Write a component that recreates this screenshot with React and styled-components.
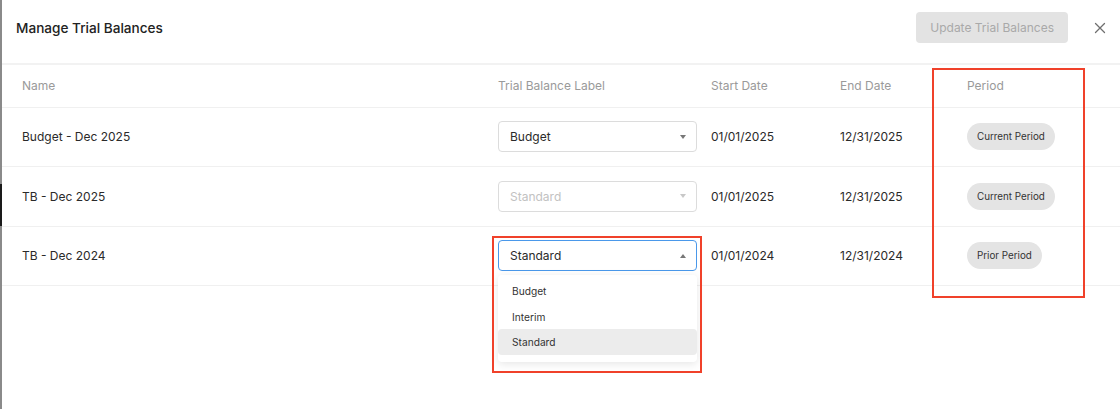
import React from "react";
import styled, { createGlobalStyle } from "styled-components";

const GlobalStyle = createGlobalStyle`
  html, body {
    margin: 0;
    padding: 0;
    background: #ffffff;
  }
  body {
    font-family: Inter, "Noto Sans", "Liberation Sans", sans-serif;
    color: #222;
  }
`;

const rows = [
  { name: "Budget - Dec 2025", label: "Budget", start: "01/01/2025", end: "12/31/2025", period: "Current Period" },
  { name: "TB - Dec 2025", label: "Standard", start: "01/01/2025", end: "12/31/2025", period: "Current Period", disabled: true },
  { name: "TB - Dec 2024", label: "Standard", start: "01/01/2024", end: "12/31/2024", period: "Prior Period", open: true },
];

const options = ["Budget", "Interim", "Standard"];

function App() {
  return (
    <>
      <GlobalStyle />
      <Page>
        <Backdrop />
        <Modal>
          <Header>
            <Title>Manage Trial Balances</Title>
            <Actions>
              <UpdateButton disabled>Update Trial Balances</UpdateButton>
              <CloseButton aria-label="close">
                <svg width="12" height="12" viewBox="0 0 12 12">
                  <path d="M1.5 1.5L10.5 10.5M10.5 1.5L1.5 10.5" stroke="#6f6f6f" strokeWidth="1.3" strokeLinecap="round" />
                </svg>
              </CloseButton>
            </Actions>
          </Header>

          <Table>
            <HeadRow>
              <HeadCell>Name</HeadCell>
              <HeadCell>Trial Balance Label</HeadCell>
              <HeadCell>Start Date</HeadCell>
              <HeadCell>End Date</HeadCell>
              <HeadCell>Period</HeadCell>
            </HeadRow>
            {rows.map((r) => (
              <Row key={r.name}>
                <Cell>{r.name}</Cell>
                <Cell>
                  <SelectWrap>
                    <Select $disabled={r.disabled} $open={r.open}>
                      <span>{r.label}</span>
                      <Caret $up={r.open} $disabled={r.disabled} />
                    </Select>
                    {r.open && (
                      <Menu>
                        {options.map((o) => (
                          <Option key={o} $active={o === r.label}>
                            {o}
                          </Option>
                        ))}
                      </Menu>
                    )}
                  </SelectWrap>
                </Cell>
                <Cell>{r.start}</Cell>
                <Cell>{r.end}</Cell>
                <Cell>
                  <Pill>{r.period}</Pill>
                </Cell>
              </Row>
            ))}
          </Table>

          <Highlight style={{ left: 490, top: 236, width: 206, height: 133 }} />
          <Highlight style={{ left: 930, top: 68, width: 149, height: 226 }} />
        </Modal>
      </Page>
    </>
  );
}

export default App;

const Page = styled.div`
  display: flex;
  height: 409px;
  width: 1120px;
  overflow: hidden;
`;

const Backdrop = styled.div`
  width: 2px;
  flex: none;
  background: linear-gradient(
    to bottom,
    #8a8a8a 0,
    #8a8a8a 184px,
    #1a1a1a 184px,
    #1a1a1a 226px,
    #8a8a8a 226px
  );
`;

const Modal = styled.div`
  position: relative;
  flex: 1;
  display: flex;
  flex-direction: column;
  background: #fff;
`;

const Header = styled.div`
  box-sizing: border-box;
  height: 65px;
  display: flex;
  align-items: center;
  justify-content: space-between;
  padding: 0 8px 8px 14px;
  border-bottom: 2px solid #f2f2f2;
`;

const Title = styled.h2`
  margin: 0;
  font-size: 13.6px;
  font-weight: 500;
  color: #222;
`;

const Actions = styled.div`
  display: flex;
  align-items: center;
  gap: 20px;
`;

const UpdateButton = styled.button`
  height: 31px;
  padding: 0 14px;
  border: none;
  border-radius: 4px;
  background: #e3e3e3;
  color: #a9a9a9;
  font-family: inherit;
  font-size: 12px;
  cursor: default;
`;

const CloseButton = styled.button`
  width: 24px;
  height: 24px;
  display: flex;
  align-items: center;
  justify-content: center;
  padding: 0;
  border: none;
  background: transparent;
`;

const Table = styled.div`
  display: flex;
  flex-direction: column;
`;

const gridCols = `
  display: grid;
  grid-template-columns: 476px 213px 129px 127px 1fr;
  padding-left: 20px;
  border-bottom: 1px solid #f0f0f0;
`;

const HeadRow = styled.div`
  ${gridCols}
  height: 41.5px;
  align-items: center;
`;

const HeadCell = styled.div`
  font-size: 12px;
  color: #9a9a9a;
`;

const Row = styled.div`
  ${gridCols}
  height: 58.5px;
  align-items: center;
`;

const Cell = styled.div`
  font-size: 12px;
  color: #2a2a2a;
  display: flex;
  align-items: center;
`;

const SelectWrap = styled.div`
  position: relative;
  width: 199px;
`;

const Select = styled.div`
  box-sizing: border-box;
  height: 31px;
  display: flex;
  align-items: center;
  justify-content: space-between;
  padding: 0 10px 0 11px;
  border: 1px solid ${(p) => (p.$open ? "#4a98ea" : "#dcdcdc")};
  border-radius: 4px;
  background: #fff;
  color: ${(p) => (p.$disabled ? "#c2c2c2" : "#2a2a2a")};
  font-size: 12px;
`;

const Caret = styled.span`
  width: 0;
  height: 0;
  border-left: 3.5px solid transparent;
  border-right: 3.5px solid transparent;
  ${(p) =>
    p.$up
      ? `border-bottom: 4px solid #777;`
      : `border-top: 4px solid ${p.$disabled ? "#c8c8c8" : "#777"};`}
`;

const Menu = styled.div`
  position: absolute;
  top: 35px;
  left: 0;
  right: 0;
  z-index: 2;
  padding: 3px 0 7px;
  background: #fff;
  border-radius: 4px;
  box-shadow: 0 2px 8px rgba(0, 0, 0, 0.1);
`;

const Option = styled.div`
  height: 25.5px;
  display: flex;
  align-items: center;
  padding: 0 14px;
  font-size: 10.2px;
  color: #333;
  border-radius: 4px;
  background: ${(p) => (p.$active ? "#ececec" : "transparent")};
`;

const Pill = styled.span`
  display: inline-flex;
  align-items: center;
  height: 27px;
  padding: 0 10px;
  border-radius: 14px;
  background: #e4e4e4;
  color: #333;
  font-size: 9.8px;
`;

const Highlight = styled.div`
  position: absolute;
  z-index: 3;
  border: 2px solid #f0412a;
  pointer-events: none;
`;
